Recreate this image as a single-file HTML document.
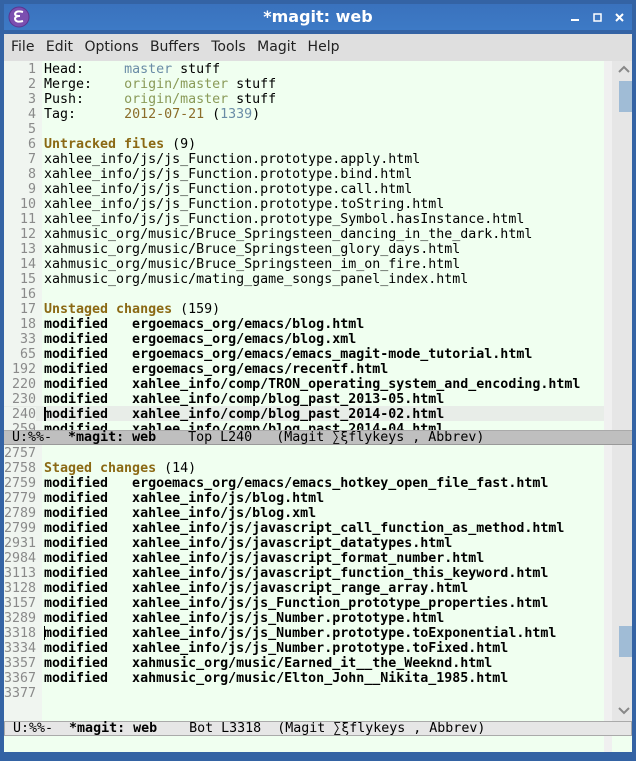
<!DOCTYPE html>
<html><head><meta charset="utf-8"><style>
*{margin:0;padding:0;box-sizing:border-box}
body{width:636px;height:761px;overflow:hidden;background:#3463a4;position:relative;font-family:"DejaVu Sans Mono","Liberation Mono",monospace;font-size:13.3px}
.tb{position:absolute;left:4px;top:4px;width:628px;height:26px;background:linear-gradient(#3a72bd,#3d7ac6)}
.title{position:absolute;left:0;width:636px;top:7px;text-align:center;color:#fff;font:bold 16px "DejaVu Sans","Liberation Sans",sans-serif}
.menu{position:absolute;left:4px;top:34px;width:628px;height:27px;background:#dfdfdf;font:14px "DejaVu Sans","Liberation Sans",sans-serif;color:#222;padding:5px 0 0 7px;word-spacing:0}
.menu span{margin-right:7px}
.pane{position:absolute;left:4px;width:600px;background:#f0fff0;overflow:hidden}
.gut{position:absolute;left:0;top:0;bottom:0;width:38px;background:#f0f5f0}
.ln{position:absolute;left:0;height:15px;line-height:15px;padding-top:1px;white-space:pre;width:600px}
.n{display:inline-block;width:32px;text-align:right;color:#8a8a8a;margin-right:8px;font-weight:normal}
.b{font-weight:bold}
.h{color:#8b6914;font-weight:bold}
.m{color:#6a8ca6}.o{color:#8a9a58}.d{color:#8b6d2a}
.sb{position:absolute;left:604px;width:28px;background:#e6e6e6;border-left:8px solid #f0f0f0}
.th{position:absolute;left:15px;width:13px;background:#a0bcd6}
.ml{position:absolute;left:4px;width:628px;height:15px;line-height:14px;white-space:pre;padding-left:8px}
</style></head><body>
<div class="tb"></div>
<svg style="position:absolute;left:7px;top:5px" width="24" height="24"><circle cx="12" cy="12" r="10" fill="#7b4fb0" stroke="#5a3590"/><path d="M16 7 Q9 5 8 9 Q8 11 13 11 Q8 11 8 14 Q9 18 16 16" fill="none" stroke="#fff" stroke-width="2"/></svg>
<div class="title">*magit: web</div>
<svg style="position:absolute;left:568px;top:12px" width="60" height="14"><rect x="3" y="7" width="8" height="2" fill="#fff"/><rect x="26" y="2" width="7" height="7" fill="none" stroke="#fff" stroke-width="1.5"/><path d="M48 2l7 7M55 2l-7 7" stroke="#fff" stroke-width="2"/></svg>
<div class="menu"><span>File</span> <span>Edit</span> <span>Options</span> <span>Buffers</span> <span>Tools</span> <span>Magit</span> <span>Help</span></div>

<div class="pane" style="top:61px;height:369px"><div class="gut"></div>
<div class="ln" style="top:0"><span class="n">1</span>Head:     <span class="m">master</span> stuff</div>
<div class="ln" style="top:15px"><span class="n">2</span>Merge:    <span class="o">origin/master</span> stuff</div>
<div class="ln" style="top:30px"><span class="n">3</span>Push:     <span class="o">origin/master</span> stuff</div>
<div class="ln" style="top:45px"><span class="n">4</span>Tag:      <span class="d">2012-07-21</span> (<span class="m">1339</span>)</div>
<div class="ln" style="top:60px"><span class="n">5</span></div>
<div class="ln" style="top:75px"><span class="n">6</span><span class="h">Untracked files</span> (9)</div>
<div class="ln" style="top:90px"><span class="n">7</span>xahlee_info/js/js_Function.prototype.apply.html</div>
<div class="ln" style="top:105px"><span class="n">8</span>xahlee_info/js/js_Function.prototype.bind.html</div>
<div class="ln" style="top:120px"><span class="n">9</span>xahlee_info/js/js_Function.prototype.call.html</div>
<div class="ln" style="top:135px"><span class="n">10</span>xahlee_info/js/js_Function.prototype.toString.html</div>
<div class="ln" style="top:150px"><span class="n">11</span>xahlee_info/js/js_Function.prototype_Symbol.hasInstance.html</div>
<div class="ln" style="top:165px"><span class="n">12</span>xahmusic_org/music/Bruce_Springsteen_dancing_in_the_dark.html</div>
<div class="ln" style="top:180px"><span class="n">13</span>xahmusic_org/music/Bruce_Springsteen_glory_days.html</div>
<div class="ln" style="top:195px"><span class="n">14</span>xahmusic_org/music/Bruce_Springsteen_im_on_fire.html</div>
<div class="ln" style="top:210px"><span class="n">15</span>xahmusic_org/music/mating_game_songs_panel_index.html</div>
<div class="ln" style="top:225px"><span class="n">16</span></div>
<div class="ln" style="top:240px"><span class="n">17</span><span class="h">Unstaged changes</span> (159)</div>
<div class="ln b" style="top:255px"><span class="n">18</span>modified   ergoemacs_org/emacs/blog.html</div>
<div class="ln b" style="top:270px"><span class="n">33</span>modified   ergoemacs_org/emacs/blog.xml</div>
<div class="ln b" style="top:285px"><span class="n">65</span>modified   ergoemacs_org/emacs/emacs_magit-mode_tutorial.html</div>
<div class="ln b" style="top:300px"><span class="n">192</span>modified   ergoemacs_org/emacs/recentf.html</div>
<div class="ln b" style="top:315px"><span class="n">220</span>modified   xahlee_info/comp/TRON_operating_system_and_encoding.html</div>
<div class="ln b" style="top:330px"><span class="n">230</span>modified   xahlee_info/comp/blog_past_2013-05.html</div>
<div class="ln b" style="top:345px;background:#e8ede8"><span class="n" style="background:#f0f5f0">240</span>modified   xahlee_info/comp/blog_past_2014-02.html</div>
<div style="position:absolute;left:40px;top:346px;width:2px;height:14px;background:#000"></div>
<div class="ln b" style="top:360px"><span class="n">259</span>modified   xahlee_info/comp/blog_past_2014-04.html</div>
</div>
<div class="sb" style="top:61px;height:369px"><svg style="position:absolute;left:6px;top:4px" width="12" height="8"><path d="M1 7l5-5 5 5" fill="none" stroke="#888" stroke-width="2"/></svg><div class="th" style="top:20px;height:31px;left:7px"></div></div>
<div class="ml" style="top:430px;background:#bfbfbf;border-top:1px solid #aaa;border-bottom:1px solid #999">U:%%-  <b>*magit: web</b>    Top L240   (Magit ∑ξflykeys , Abbrev)</div>

<div class="pane" style="top:445px;height:276px"><div class="gut"></div>
<div class="ln" style="top:0"><span class="n">2757</span></div>
<div class="ln" style="top:15px"><span class="n">2758</span><span class="h">Staged changes</span> (14)</div>
<div class="ln b" style="top:30px"><span class="n">2759</span>modified   ergoemacs_org/emacs/emacs_hotkey_open_file_fast.html</div>
<div class="ln b" style="top:45px"><span class="n">2779</span>modified   xahlee_info/js/blog.html</div>
<div class="ln b" style="top:60px"><span class="n">2789</span>modified   xahlee_info/js/blog.xml</div>
<div class="ln b" style="top:75px"><span class="n">2799</span>modified   xahlee_info/js/javascript_call_function_as_method.html</div>
<div class="ln b" style="top:90px"><span class="n">2931</span>modified   xahlee_info/js/javascript_datatypes.html</div>
<div class="ln b" style="top:105px"><span class="n">2984</span>modified   xahlee_info/js/javascript_format_number.html</div>
<div class="ln b" style="top:120px"><span class="n">3113</span>modified   xahlee_info/js/javascript_function_this_keyword.html</div>
<div class="ln b" style="top:135px"><span class="n">3128</span>modified   xahlee_info/js/javascript_range_array.html</div>
<div class="ln b" style="top:150px"><span class="n">3157</span>modified   xahlee_info/js/js_Function_prototype_properties.html</div>
<div class="ln b" style="top:165px"><span class="n">3289</span>modified   xahlee_info/js/js_Number.prototype.html</div>
<div class="ln b" style="top:180px"><span class="n">3318</span>modified   xahlee_info/js/js_Number.prototype.toExponential.html</div>
<div style="position:absolute;left:40px;top:181px;width:1px;height:14px;background:#000"></div>
<div class="ln b" style="top:195px"><span class="n">3334</span>modified   xahlee_info/js/js_Number.prototype.toFixed.html</div>
<div class="ln b" style="top:210px"><span class="n">3357</span>modified   xahmusic_org/music/Earned_it__the_Weeknd.html</div>
<div class="ln b" style="top:225px"><span class="n">3367</span>modified   xahmusic_org/music/Elton_John__Nikita_1985.html</div>
<div class="ln" style="top:240px"><span class="n">3377</span></div>
</div>
<div class="sb" style="top:445px;height:276px"><div class="th" style="top:181px;height:31px;left:7px"></div><svg style="position:absolute;left:6px;top:262px" width="12" height="8"><path d="M1 1l5 5 5-5" fill="none" stroke="#888" stroke-width="2"/></svg></div>
<div class="ml" style="top:721px;background:#e6e6e6;border:1px solid #aaa">U:%%-  <b>*magit: web</b>    Bot L3318  (Magit ∑ξflykeys , Abbrev)</div>
<div style="position:absolute;left:4px;top:736px;width:628px;height:16px;background:#f0fff0"></div>
<div style="position:absolute;left:604px;top:736px;width:8px;height:16px;background:#f0f0f0"></div>
</body></html>
